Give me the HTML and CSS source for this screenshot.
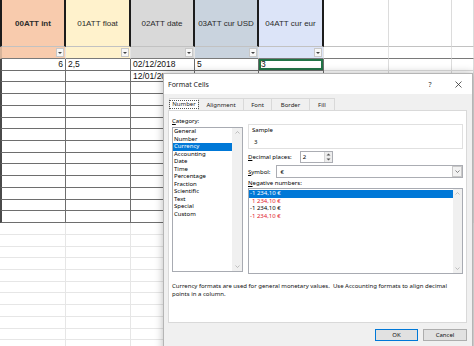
FILE: index.html
```html
<!DOCTYPE html>
<html lang="en">

<head>
    <meta charset="UTF-8">
    <meta name="viewport" content="width=device-width, initial-scale=1.0">
    <title>Format Cells</title>
    <link rel="stylesheet" href="styles.css">
</head>

<body>
    <div class="sheet">
        <div class="row head">
            <div class="hcol a bold">00ATT int</div>
            <div class="hcol b">01ATT float</div>
            <div class="hcol c">02ATT date</div>
            <div class="hcol d">03ATT cur USD</div>
            <div class="hcol e">04ATT cur eur</div>
            <div></div><div></div><div></div>
        </div>
        <div class="row filters">
            <div class="a"><span class="drop"></span></div>
            <div class="b"><span class="drop"></span></div>
            <div class="c"><span class="drop"></span></div>
            <div class="d"><span class="drop"></span></div>
            <div class="e"><span class="drop"></span></div>
            <div></div><div></div><div></div>
        </div>
        <div class="row t">
            <div class="num">6</div><div>2,5</div><div>02/12/2018</div><div>5</div><div class="sel">3</div>
            <div></div><div></div><div></div>
        </div>
        <div class="row t"><div></div><div></div><div>12/01/2019</div><div></div><div></div><div></div><div></div><div></div></div>
        <div class="row t"><div></div><div></div><div></div><div></div><div></div><div></div><div></div><div></div></div>
        <div class="row t"><div></div><div></div><div></div><div></div><div></div><div></div><div></div><div></div></div>
        <div class="row t"><div></div><div></div><div></div><div></div><div></div><div></div><div></div><div></div></div>
        <div class="row t"><div></div><div></div><div></div><div></div><div></div><div></div><div></div><div></div></div>
        <div class="row t"><div></div><div></div><div></div><div></div><div></div><div></div><div></div><div></div></div>
        <div class="row t"><div></div><div></div><div></div><div></div><div></div><div></div><div></div><div></div></div>
        <div class="row t"><div></div><div></div><div></div><div></div><div></div><div></div><div></div><div></div></div>
        <div class="row t"><div></div><div></div><div></div><div></div><div></div><div></div><div></div><div></div></div>
        <div class="row t"><div></div><div></div><div></div><div></div><div></div><div></div><div></div><div></div></div>
        <div class="row t"><div></div><div></div><div></div><div></div><div></div><div></div><div></div><div></div></div>
        <div class="row t"><div></div><div></div><div></div><div></div><div></div><div></div><div></div><div></div></div>
        <div class="row t"><div></div><div></div><div></div><div></div><div></div><div></div><div></div><div></div></div>
        <div class="row p"><div></div><div></div><div></div><div></div><div></div><div></div><div></div><div></div></div>
        <div class="row p"><div></div><div></div><div></div><div></div><div></div><div></div><div></div><div></div></div>
        <div class="row p"><div></div><div></div><div></div><div></div><div></div><div></div><div></div><div></div></div>
        <div class="row p"><div></div><div></div><div></div><div></div><div></div><div></div><div></div><div></div></div>
        <div class="row p"><div></div><div></div><div></div><div></div><div></div><div></div><div></div><div></div></div>
        <div class="row p"><div></div><div></div><div></div><div></div><div></div><div></div><div></div><div></div></div>
        <div class="row p"><div></div><div></div><div></div><div></div><div></div><div></div><div></div><div></div></div>
        <div class="row p"><div></div><div></div><div></div><div></div><div></div><div></div><div></div><div></div></div>
        <div class="row p"><div></div><div></div><div></div><div></div><div></div><div></div><div></div><div></div></div>
        <div class="row p"><div></div><div></div><div></div><div></div><div></div><div></div><div></div><div></div></div>
        <div class="row p"><div></div><div></div><div></div><div></div><div></div><div></div><div></div><div></div></div>
    </div>

    <!-- dialog sits over the sheet -->
    <div class="dialog">
        <div class="titlebar">
            <span class="title">Format Cells</span>
            <span class="tb-btn">?</span>
            <span class="tb-btn">
                <svg width="7" height="7" viewBox="0 0 7 7"><path d="M0.5 0.5L6.5 6.5M6.5 0.5L0.5 6.5" stroke="#333" stroke-width="0.8"/></svg>
            </span>
        </div>

        <div class="tabs">
            <div class="tab active"><span>Number</span></div>
            <div class="tab">Alignment</div>
            <div class="tab">Font</div>
            <div class="tab">Border</div>
            <div class="tab">Fill</div>
        </div>

        <div class="panel">
            <div class="panel-main">
                <div class="cat">
                    <div class="lbl"><u>C</u>ategory:</div>
                    <div class="listbox cat-list">
                        <div class="items">
                            <div>General</div>
                            <div>Number</div>
                            <div class="on">Currency</div>
                            <div>Accounting</div>
                            <div>Date</div>
                            <div>Time</div>
                            <div>Percentage</div>
                            <div>Fraction</div>
                            <div>Scientific</div>
                            <div>Text</div>
                            <div>Special</div>
                            <div>Custom</div>
                        </div>
                        <div class="scroll">
                            <svg width="5" height="3" viewBox="0 0 5 3"><path d="M0.5 2.5L2.5 0.5L4.5 2.5" fill="none" stroke="#a6a6a6" stroke-width="0.7"/></svg>
                            <svg width="5" height="3" viewBox="0 0 5 3"><path d="M0.5 0.5L2.5 2.5L4.5 0.5" fill="none" stroke="#a6a6a6" stroke-width="0.7"/></svg>
                        </div>
                    </div>
                </div>

                <div class="opts">
                    <div class="sample">
                        <div>Sample</div>
                        <div class="sample-val">3</div>
                    </div>
                    <div class="field">
                        <span class="lbl"><u>D</u>ecimal places:</span>
                        <div class="spin">
                            <span class="spin-val">2</span>
                            <span class="spin-btns">
                                <svg width="5" height="3" viewBox="0 0 5 3"><path d="M0.5 2.5L2.5 0.5L4.5 2.5Z" fill="#555"/></svg>
                                <svg width="5" height="3" viewBox="0 0 5 3"><path d="M0.5 0.5L2.5 2.5L4.5 0.5Z" fill="#555"/></svg>
                            </span>
                        </div>
                    </div>
                    <div class="field sym">
                        <span class="lbl"><u>S</u>ymbol:</span>
                        <div class="select">
                            <span class="sel-val">€</span>
                            <span class="sel-btn">
                                <svg width="5" height="3" viewBox="0 0 5 3"><path d="M0.5 0.5L2.5 2.5L4.5 0.5" fill="none" stroke="#555" stroke-width="0.7"/></svg>
                            </span>
                        </div>
                    </div>
                    <div class="lbl neg-lbl"><u>N</u>egative numbers:</div>
                    <div class="listbox neg-list">
                        <div class="items">
                            <div class="on">-1 234,10 €</div>
                            <div class="red indent">1 234,10 €</div>
                            <div>-1 234,10 €</div>
                            <div class="red">-1 234,10 €</div>
                        </div>
                        <div class="scroll">
                            <svg width="5" height="3" viewBox="0 0 5 3"><path d="M0.5 2.5L2.5 0.5L4.5 2.5" fill="none" stroke="#a6a6a6" stroke-width="0.7"/></svg>
                            <svg width="5" height="3" viewBox="0 0 5 3"><path d="M0.5 0.5L2.5 2.5L4.5 0.5" fill="none" stroke="#a6a6a6" stroke-width="0.7"/></svg>
                        </div>
                    </div>
                </div>
            </div>
            <p class="desc">Currency formats are used for general monetary values.&nbsp; Use Accounting formats to align decimal<br>points in a column.</p>
        </div>

        <div class="footer">
            <button class="btn ok">OK</button>
            <button class="btn">Cancel</button>
        </div>
    </div>
</body>

</html>
```

FILE: styles.css
```css
* {
    box-sizing: border-box;
}

body {
    margin: 0;
    width: 474px;
    height: 346px;
    overflow: hidden;
    position: relative;
    background-color: #FFFFFF;
    font-family: "Liberation Sans", Arial, sans-serif;
}

/* spreadsheet */

.sheet {
    font-size: 8.5px;
    color: #111;
}

.row {
    display: grid;
    grid-template-columns: 66px 65px 64px 64px 65px 65px 63px 1fr;
}

.row > div {
    border-right: 1px solid #dcdcdc;
    border-bottom: 1px solid #dcdcdc;
    white-space: nowrap;
    overflow: hidden;
    position: relative;
}

.head {
    height: 47px;
}

.head > div {
    display: flex;
    align-items: center;
    justify-content: center;
    border-bottom-color: #c2c2c2;
}

.head .hcol {
    border-right: 2px solid #1c1c1c;
    color: #2b2b2b;
    font-size: 8px;
}

.head .hcol:first-child {
    border-left: 2px solid #1c1c1c;
}

.bold {
    font-weight: bold;
}

.a { background-color: #F8CBAD; }
.b { background-color: #FFF2CC; }
.c { background-color: #D9D9D9; }
.d { background-color: #C9D3DE; }
.e { background-color: #DCE4F8; }

.filters {
    height: 12px;
}

.filters > div {
    display: flex;
    justify-content: flex-end;
    align-items: center;
    padding-right: 1px;
    border-bottom-color: #7a7a7a;
    border-right-color: #e4e4e4;
}

.filters > div:first-child {
    border-left: 2px solid #d8b49a;
}

.drop {
    width: 8px;
    height: 9px;
    background-color: #F7F7F7;
    border: 1px solid #C8C8C8;
    display: flex;
    align-items: center;
    justify-content: center;
}

.drop::after {
    content: "";
    border-left: 2px solid transparent;
    border-right: 2px solid transparent;
    border-top: 2px solid #444;
}

.t,
.p {
    height: 11.72px;
    line-height: 10.7px;
}

.t > div:nth-child(-n+5) {
    border-right-color: #6e6e6e;
    border-bottom-color: #6e6e6e;
    padding-left: 2px;
}

.t > div:first-child {
    border-left: 2px solid #4a4a4a;
}

.t .num {
    text-align: right;
    padding-right: 2px;
}

.sel {
    box-shadow: inset 0 0 0 2px #217346;
}

.p > div {
    border-right-color: #e6e6e6;
    border-bottom-color: #e6e6e6;
}

/* dialog */

.dialog {
    position: absolute;
    left: 163px;
    top: 73px;
    width: 310px;
    height: 290px;
    background-color: #F0F0F0;
    border: 1px solid #B5B5B5;
    box-shadow: 0 0 8px rgba(0, 0, 0, 0.28);
    font-family: "Noto Sans", "Open Sans", sans-serif;
    font-size: 6px;
    color: #000;
}

.titlebar {
    height: 20px;
    background-color: #FFFFFF;
    display: flex;
    align-items: center;
    padding-left: 4px;
    font-size: 7px;
    color: #222;
}

.title {
    flex: 1;
}

.tb-btn {
    width: 28px;
    height: 20px;
    display: flex;
    align-items: center;
    justify-content: center;
    color: #333;
}

.tabs {
    display: flex;
    margin-top: 4px;
    padding-left: 5px;
    height: 12px;
}

.tab {
    height: 12px;
    display: flex;
    align-items: center;
    justify-content: center;
    border: 1px solid #D9D9D9;
    border-left: none;
    border-bottom: none;
    background-color: #F0F0F0;
    color: #222;
}

.tab:nth-child(2) { width: 45px; }
.tab:nth-child(3) { width: 28px; }
.tab:nth-child(4) { width: 38px; }
.tab:nth-child(5) { width: 25px; }

.tab.active {
    width: 30px;
    background-color: #FFFFFF;
    border-left: 1px solid #D9D9D9;
}

.tab.active span {
    border: 1px dotted #555;
    padding: 0 2px;
    line-height: 7px;
}

.panel {
    margin-left: 4px;
    width: 299px;
    height: 213px;
    background-color: #FFFFFF;
    border: 1px solid #D9D9D9;
    padding-left: 3px;
}

.panel-main {
    display: flex;
    gap: 5px;
}

.lbl {
    line-height: 8px;
    white-space: nowrap;
}

.cat {
    width: 71px;
    padding-top: 6px;
}

.cat .lbl {
    margin-bottom: 2px;
}

.listbox {
    display: flex;
    border: 1px solid #A8ABB2;
    background-color: #FFFFFF;
}

.items {
    flex: 1;
    line-height: 7.55px;
    white-space: nowrap;
}

.items > div {
    padding-left: 1px;
}

.items .on {
    background-color: #0078D7;
    color: #FFFFFF;
}

.scroll {
    width: 10px;
    background-color: #F0F0F0;
    display: flex;
    flex-direction: column;
    justify-content: space-between;
    align-items: center;
    padding: 3px 0;
}

.cat-list {
    height: 145px;
}

.opts {
    width: 215px;
    padding-top: 13px;
}

.sample {
    height: 25px;
    border: 1px solid #E0E0E0;
    padding: 1px 0 0 3px;
    line-height: 8px;
}

.sample-val {
    margin-top: 4px;
    padding-left: 2px;
}

.field {
    display: flex;
    align-items: center;
    height: 12px;
    margin-top: 2px;
}

.spin {
    margin-left: 8px;
    width: 33px;
    height: 12px;
    border: 1px solid #ABADB3;
    display: flex;
    align-items: center;
}

.spin-val {
    flex: 1;
    padding-left: 2px;
}

.spin-btns {
    width: 8px;
    height: 10px;
    display: flex;
    flex-direction: column;
    align-items: center;
    justify-content: space-around;
    background-color: #EDEDED;
    border-left: 1px solid #D6D6D6;
}

.sym {
    height: 13px;
}

.select {
    margin-left: 6px;
    flex: 1;
    height: 13px;
    border: 1px solid #ABADB3;
    display: flex;
    align-items: center;
}

.sel-val {
    flex: 1;
    padding-left: 3px;
}

.sel-btn {
    width: 10px;
    height: 11px;
    border: 1px solid #C9C9C9;
    background-color: #F2F2F2;
    display: flex;
    align-items: center;
    justify-content: center;
}

.neg-lbl {
    margin-top: 1px;
}

.neg-list {
    margin-top: 1px;
    height: 86px;
}

.neg-list .items {
    padding-top: 1px;
}

.neg-list .scroll {
    width: 9px;
}

.red {
    color: #E0202A;
}

.indent {
    padding-left: 3px !important;
}

.desc {
    margin: 8px 0 0;
    line-height: 8px;
    white-space: nowrap;
    color: #111;
}

.footer {
    display: flex;
    justify-content: flex-end;
    gap: 5px;
    padding: 6px 5px 0 0;
}

.btn {
    width: 44px;
    height: 12px;
    padding: 0;
    background-color: #E1E1E1;
    border: 1px solid #ADADAD;
    font-family: "Noto Sans", "Open Sans", sans-serif;
    font-size: 6px;
    color: #111;
}

.btn.ok {
    width: 43px;
    border-color: #0078D7;
}
```
